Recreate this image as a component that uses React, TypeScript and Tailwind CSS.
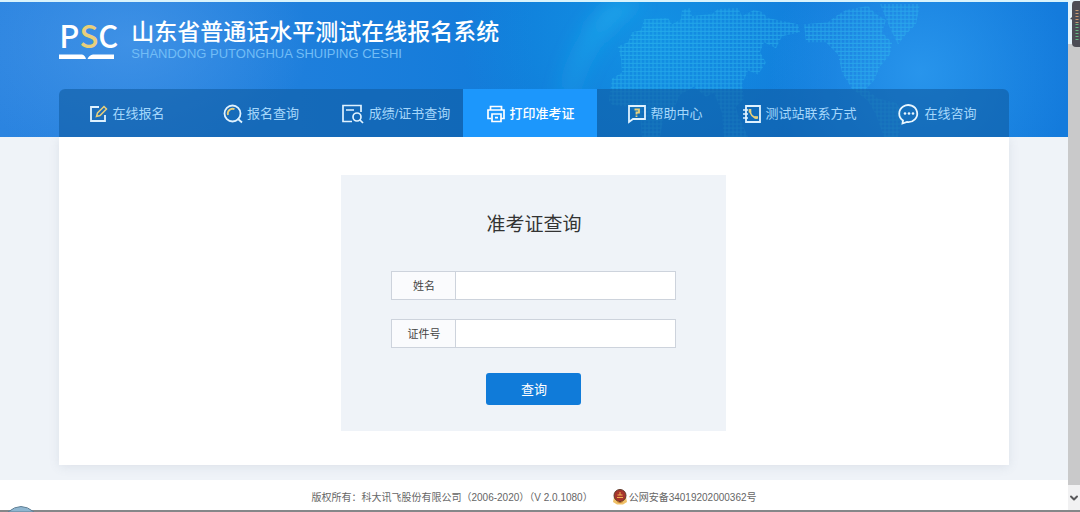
import { useState, type FormEvent, type ReactNode } from 'react';
import { ChevronDown } from 'lucide-react';
import clsx from 'clsx';

const GOLD = '#e8cf7a';

interface NavItem {
  label: string;
  icon: ReactNode;
  active?: boolean;
}

const NAV: NavItem[] = [
  { label: '在线报名', icon: <EditIcon /> },
  { label: '报名查询', icon: <SearchIcon /> },
  { label: '成绩/证书查询', icon: <ScoreIcon /> },
  { label: '打印准考证', icon: <PrintIcon />, active: true },
  { label: '帮助中心', icon: <HelpIcon /> },
  { label: '测试站联系方式', icon: <ContactIcon /> },
  { label: '在线咨询', icon: <ChatIcon /> },
];

export default function App() {
  return (
    <div className="flex min-h-screen flex-col bg-[#eff3f8] font-['Liberation_Sans','Noto_Sans_CJK_SC',sans-serif]">
      <div className="flex flex-1">
        <div className="flex min-w-0 flex-1 flex-col">
          <Header />
          <main className="mx-auto flex w-8/9 flex-1 justify-center bg-white pt-[38px] pb-[34px] shadow-[0_2px_10px_rgba(90,110,130,0.12)]">
            <QueryForm />
          </main>
          <Footer />
        </div>
        <Scrollbar />
      </div>
      <Taskbar />
    </div>
  );
}

function Header() {
  return (
    <header className="relative border-t-2 border-[#d9f3fc] bg-linear-to-r from-[#2b84e0] via-[#107bd9] to-[#147bdc]">
      <HeaderBackdrop />
      <div className="relative mx-auto w-8/9">
        <div className="flex h-[87px] items-start gap-4 pt-4">
          <Logo />
          <div>
            <div className="text-[23px] leading-7 font-medium text-white">山东省普通话水平测试在线报名系统</div>
            <div className="text-[13px] leading-4 text-[#72bdf6]">SHANDONG PUTONGHUA SHUIPING CESHI</div>
          </div>
        </div>
        <nav className="grid h-12 grid-cols-[repeat(6,17fr)_18fr] overflow-hidden rounded-t-md bg-[#0f5ba2]/60">
          {NAV.map((item) => (
            <a
              key={item.label}
              href="#"
              aria-current={item.active ? 'page' : undefined}
              className={clsx(
                'flex items-center justify-center gap-1 pt-0.5 text-[13px] whitespace-nowrap',
                item.active ? 'bg-[#1c97fc] font-medium text-white' : 'text-[#a5d7fb]'
              )}
            >
              {item.icon}
              {item.label}
            </a>
          ))}
        </nav>
      </div>
    </header>
  );
}

function Logo() {
  return (
    <div className="w-14 text-white">
      <div className="flex h-[34px] items-center font-['Noto_Sans_CJK_SC',sans-serif] text-[31px] leading-8 font-medium">
        <span>P</span>
        <span className="text-[#e8cf7a]">S</span>
        <span>C</span>
      </div>
      <svg className="block" width="56" height="8" viewBox="0 0 56 8" fill="currentColor">
        <path d="M0 2.500H23Q26 3 27 7H0Z" />
        <path d="M55 2.500H34Q30 3 28.500 7H55Z" />
      </svg>
    </div>
  );
}

// glow, light arc and the dotted world map behind the title
function HeaderBackdrop() {
  return (
    <svg
      className="absolute inset-0 h-full w-full"
      viewBox="0 0 1068 134"
      preserveAspectRatio="none"
      aria-hidden="true"
    >
      <defs>
        <pattern id="dots" width="4" height="4" patternUnits="userSpaceOnUse">
          <path d="M0 1H4M1 0V4" stroke="#35c5f2" strokeWidth="1" />
        </pattern>
        <radialGradient id="glowLeft">
          <stop offset="0" stopColor="#4796e8" stopOpacity="0.75" />
          <stop offset="1" stopColor="#4796e8" stopOpacity="0" />
        </radialGradient>
        <radialGradient id="glowMid">
          <stop offset="0" stopColor="#139be8" stopOpacity="0.7" />
          <stop offset="1" stopColor="#139be8" stopOpacity="0" />
        </radialGradient>
        <radialGradient id="glowRight">
          <stop offset="0" stopColor="#2d9bf0" stopOpacity="0.8" />
          <stop offset="1" stopColor="#2d9bf0" stopOpacity="0" />
        </radialGradient>
        <linearGradient id="arc" x1="0" y1="1" x2="0.6" y2="0">
          <stop offset="0" stopColor="#15a4ee" stopOpacity="0.1" />
          <stop offset="1" stopColor="#25b9f2" stopOpacity="0.45" />
        </linearGradient>
        <filter id="soft" x="-30%" y="-10%" width="160%" height="120%">
          <feGaussianBlur stdDeviation="8" />
        </filter>
      </defs>
      <ellipse cx="130" cy="40" rx="180" ry="120" fill="url(#glowLeft)" />
      <ellipse cx="650" cy="30" rx="190" ry="150" fill="url(#glowMid)" />
      <ellipse cx="920" cy="70" rx="150" ry="150" fill="url(#glowRight)" />
      <path d="M552 134C552 80 574 28 608 0H646C602 28 576 78 574 134Z" fill="url(#arc)" filter="url(#soft)" />
      <g fill="url(#dots)" opacity="0.45">
        <path d="M609 98L612 76L622 70L621 56L618 44L628 40L632 30L641 28L644 17L668 16L672 22L681 17L682 8L690 6L692 14L712 12L718 7L738 6L742 14L754 8L762 10L768 16L798 22L800 30L782 34L776 46L764 40L760 50L766 60L758 72L748 68L742 82L744 96L736 104L738 112L748 134H724L722 110L714 90L706 94L694 84L680 92L674 106L664 112L660 134H642L640 112L628 104L612 102Z" />
        <path d="M804 22L828 20L836 14L846 8L868 4L876 12L886 18L882 30L892 40L890 52L880 64L874 78L866 86L878 96L896 100L904 112L898 134H884L876 112L868 98L852 86L842 70L838 52L826 40L806 40Z" />
        <path d="M880 2H920L916 22L906 32L898 42L890 26Z" />
      </g>
    </svg>
  );
}

function QueryForm() {
  const [name, setName] = useState('');
  const [idNumber, setIdNumber] = useState('');

  const onSubmit = (e: FormEvent) => {
    e.preventDefault();
  };

  return (
    <form onSubmit={onSubmit} className="flex w-[385px] flex-col items-center bg-[#eff3f8] px-[50px] pt-9 pb-[26px]">
      <h1 className="text-[19px] leading-7 text-[#333]">准考证查询</h1>
      <div className="mt-8 flex w-full flex-col gap-[19px]">
        <Field id="name" label="姓名" value={name} onChange={setName} />
        <Field id="id-number" label="证件号" value={idNumber} onChange={setIdNumber} />
      </div>
      <button type="submit" className="mt-[25px] h-8 w-[95px] rounded-[3px] bg-[#107bd9] pt-0.5 text-[13px] text-white">
        查询
      </button>
    </form>
  );
}

interface FieldProps {
  id: string;
  label: string;
  value: string;
  onChange: (value: string) => void;
}

function Field({ id, label, value, onChange }: FieldProps) {
  return (
    <div className="flex h-[29px] border border-[#cdd3dc] bg-white">
      <label
        htmlFor={id}
        className="flex w-16 items-center justify-center border-r border-[#cdd3dc] bg-[#fafbfd] pt-0.5 text-[11px] text-[#444]"
      >
        {label}
      </label>
      <input
        id={id}
        className="min-w-0 flex-1 px-2 text-[11px] outline-none"
        value={value}
        onChange={(e) => onChange(e.target.value)}
      />
    </div>
  );
}

function Footer() {
  return (
    <footer className="mt-[15px] flex h-[30px] items-center justify-center gap-5 bg-white pt-1 text-[10px] text-[#666]">
      <span>版权所有：科大讯飞股份有限公司（2006-2020）（V 2.0.1080）</span>
      <span className="flex items-center gap-0.5">
        <PoliceBadge />
        公网安备34019202000362号
      </span>
    </footer>
  );
}

function Scrollbar() {
  return (
    <aside className="flex w-3 flex-col items-end bg-[#c9c9ca]" aria-hidden="true">
      <div className="flex h-11 w-full justify-end bg-[#e4f3fb]">
        <svg width="10" height="47" viewBox="0 0 10 47" className="shrink-0">
          <path d="M10 1H5Q2 1 2 5V43Q2 47 6 47H10Z" fill="#4c4c55" />
          <path d="M0 19L4 15V20Z" fill="#4c4c55" />
          <path d="M7 10V24" stroke="#c69a72" strokeWidth="3" strokeDasharray="1 2" />
          <path d="M7 24V42" stroke="#67b583" strokeWidth="3" strokeDasharray="1 2" />
        </svg>
      </div>
      <div className="flex-1" />
      <div className="flex h-[25px] w-full items-center justify-center bg-[#f1f1f2]">
        <ChevronDown size={12} strokeWidth={4} className="text-[#58585a]" />
      </div>
    </aside>
  );
}

function Taskbar() {
  return (
    <div className="relative h-0.5 bg-[#858789]">
      <svg className="absolute bottom-0 left-1" width="34" height="6" viewBox="0 0 34 6" aria-hidden="true">
        <path d="M4 6Q17 -5 30 6Z" fill="#8fb6d0" stroke="#5f7f95" />
      </svg>
    </div>
  );
}

function EditIcon() {
  return (
    <svg width="20" height="20" viewBox="0 0 20 20" fill="none" stroke="#dff2ff" strokeWidth="1.8">
      <path d="M10 3H2V17H16V11" />
      <path d="M7.500 12.500L8.500 9L15 2.500L17.500 5L11 11.500Z" stroke={GOLD} strokeWidth="1.5" />
    </svg>
  );
}

function SearchIcon() {
  return (
    <svg width="20" height="20" viewBox="0 0 20 20" fill="none" stroke="#dff2ff" strokeWidth="1.8">
      <circle cx="9.500" cy="9.500" r="8" />
      <path d="M14.500 14.500L19 18.500" />
      <path d="M5 11A4.800 4.800 0 0 1 11.500 5.200" stroke={GOLD} />
    </svg>
  );
}

function ScoreIcon() {
  return (
    <svg width="24" height="20" viewBox="0 0 24 20" fill="none" stroke="#dff2ff" strokeWidth="1.700">
      <path d="M11 17.500H2V1.500H20V8M5 6H13" />
      <circle cx="16" cy="13" r="4" />
      <path d="M19 16L22 19" />
    </svg>
  );
}

function PrintIcon() {
  return (
    <svg width="20" height="20" viewBox="0 0 20 20" fill="none" stroke="#fff" strokeWidth="1.700">
      <path d="M4.500 6V2.500H15.500V6" />
      <path d="M5 14.500H2V6H18V14.500H15" />
      <path d="M6 10H15V17.500H6ZM9 13.700H12" />
    </svg>
  );
}

function HelpIcon() {
  return (
    <svg width="20" height="20" viewBox="0 0 20 20" fill="none" stroke="#dff2ff" strokeWidth="1.800">
      <path d="M2 2H18V15H6L2 18Z" />
      <path d="M7.500 5.500H12V8.500H9.500V10.500M9.500 11.500V13" stroke={GOLD} />
    </svg>
  );
}

function ContactIcon() {
  return (
    <svg width="20" height="20" viewBox="0 0 20 20" fill="none" stroke="#dff2ff" strokeWidth="1.800">
      <path d="M4 2H18V18H4Z" />
      <path d="M1 6H6M1 10H6M1 14H6" strokeWidth="1.500" />
      <path d="M8 6C8 10.500 11 13.500 15 14" stroke={GOLD} strokeWidth="1.800" />
      <path d="M8 5V8.500M12.500 13.500H16" stroke={GOLD} strokeWidth="2.600" />
    </svg>
  );
}

function ChatIcon() {
  return (
    <svg width="22" height="22" viewBox="0 0 22 22" fill="none" stroke="#e8f6ff" strokeWidth="1.800">
      <path d="M5 17.500A9 8.500 0 1 1 9 19L4.500 20.500Z" />
      <g fill="#e8f6ff" stroke="none">
        <circle cx="7" cy="10.500" r="1.300" />
        <circle cx="11" cy="10.500" r="1.300" />
        <circle cx="15" cy="10.500" r="1.300" />
      </g>
    </svg>
  );
}

function PoliceBadge() {
  return (
    <svg width="14" height="16" viewBox="0 0 14 16" aria-hidden="true">
      <path d="M1 8L0 13L4 15.500H10L14 13L13 8Z" fill="#efc168" />
      <circle cx="7" cy="6.500" r="6" fill="#a8352c" stroke="#5e3a2a" strokeWidth="1" />
      <path d="M4 8.500H10M4.500 6H9.500M7 3V6" stroke="#f0b452" strokeWidth="1" />
      <path d="M4 12.500Q7 15 10 12.500" stroke="#c3742f" fill="none" />
    </svg>
  );
}
